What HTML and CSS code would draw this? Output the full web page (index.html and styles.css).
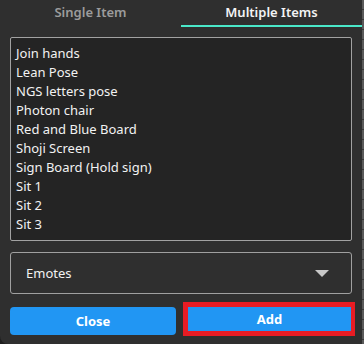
FILE: index.html
```html
<!DOCTYPE html>
<html lang="en">
<head>
    <meta charset="UTF-8">
    <meta name="viewport" content="width=device-width, initial-scale=1.0">
    <title>Add items</title>
    <link rel="stylesheet" href="styles.css">
</head>
<body>
    <div class="window">
        <div class="panel">
            <div class="tabs">
                <div class="tab">Single Item</div>
                <div class="tab active">Multiple Items</div>
            </div>
            <div class="content">
                <ul class="item-list">
                    <li>Join hands</li>
                    <li>Lean Pose</li>
                    <li>NGS letters pose</li>
                    <li>Photon chair</li>
                    <li>Red and Blue Board</li>
                    <li>Shoji Screen</li>
                    <li>Sign Board (Hold sign)</li>
                    <li>Sit 1</li>
                    <li>Sit 2</li>
                    <li>Sit 3</li>
                </ul>
                <div class="dropdown">
                    <span>Emotes</span>
                    <svg class="arrow" width="14" height="7" viewBox="0 0 14 7"><path d="M0 0 L14 0 L7 7 Z" fill="#c8c8c8"/></svg>
                </div>
                <div class="actions">
                    <button type="button" class="btn btn-close">Close</button>
                    <div class="highlight">
                        <button type="button" class="btn btn-add">Add</button>
                    </div>
                </div>
            </div>
        </div>
        <div class="edge"></div>
    </div>
</body>
</html>
```

FILE: styles.css
```css
* {
    box-sizing: border-box;
}

body {
    margin: 0;
    padding: 0;
    background-color: #1e1e1e;
    font-family: 'Noto Sans', 'Open Sans', sans-serif;
    font-size: 13px;
    color: #f2f2f2;
}

.window {
    display: flex;
    width: 364px;
    height: 344px;
    background-color: #2f2f2f;
    border-bottom-left-radius: 8px;
    overflow: hidden;
}

.panel {
    width: 362px;
}

.edge {
    width: 2px;
    background: repeating-linear-gradient(#5a5a5a 0, #5a5a5a 9px, #3a3a3a 9px, #3a3a3a 10px);
}

.tabs {
    display: flex;
    height: 27px;
}

.tab {
    flex: 1;
    text-align: center;
    font-weight: 600;
    line-height: 25px;
    color: #9c9c9c;
    border-bottom: 2px solid transparent;
}

.tab.active {
    color: #f4f4f4;
    border-bottom-color: #4ae8c9;
}

.content {
    padding: 10px 10px 0 10px;
}

.item-list {
    list-style: none;
    margin: 0;
    height: 204px;
    padding: 6px 5px;
    background-color: #242424;
    border: 1px solid #a2a2a2;
    border-radius: 2px;
}

.item-list li {
    line-height: 19px;
}

.dropdown {
    display: flex;
    align-items: center;
    justify-content: space-between;
    height: 42px;
    margin-top: 11px;
    padding: 0 22px 0 15px;
    border: 1px solid #a0a0a0;
    border-radius: 3px;
}

.arrow {
    display: block;
}

.actions {
    display: flex;
    align-items: flex-start;
    gap: 7px;
    margin-top: 8px;
}

.btn {
    border: 0;
    border-radius: 4px;
    background-color: #2196f3;
    color: #fff;
    font-family: inherit;
    font-size: 13px;
    font-weight: 700;
    padding: 0;
}

.btn-close {
    flex-shrink: 0;
    width: 166px;
    height: 28px;
    margin-top: 5px;
}

.highlight {
    flex-shrink: 0;
    width: 172px;
    height: 34px;
    border: 5px solid #e81c24;
    border-right-width: 4px;
}

.btn-add {
    display: block;
    width: 100%;
    height: 24px;
    border-radius: 0;
}
```
